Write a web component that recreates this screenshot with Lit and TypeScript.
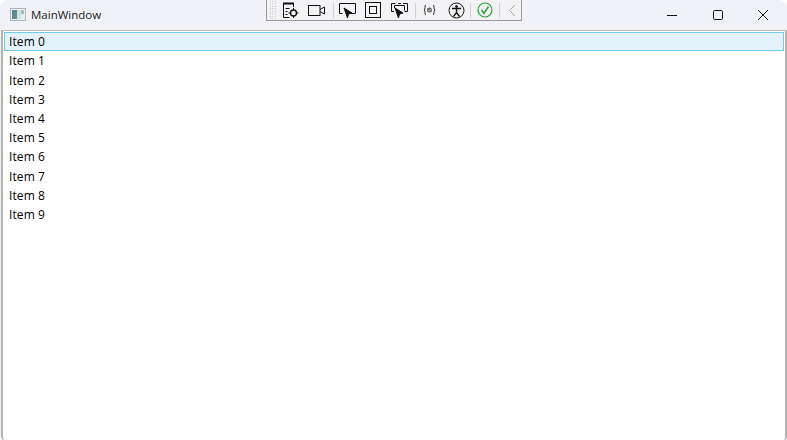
import { LitElement, css, html } from 'lit'
import { customElement } from 'lit/decorators.js'

const items = ['Item 0', 'Item 1', 'Item 2', 'Item 3', 'Item 4', 'Item 5', 'Item 6', 'Item 7', 'Item 8', 'Item 9']

@customElement('app-root')
export class AppRoot extends LitElement {
  static styles = css`
    :host {
      display: block;
      width: 787px;
      height: 440px;
      background: #ffffff;
      overflow: hidden;
      font-family: "Open Sans", "Noto Sans", sans-serif;
      font-size: 12px;
      color: #000;
    }
    .window {
      box-sizing: border-box;
      height: 440px;
      display: flex;
      flex-direction: column;
      border-radius: 8px 8px 0 0;
      background: #f1f2f8;
      position: relative;
      overflow: hidden;
    }
    .titlebar {
      height: 30px;
      flex: none;
      display: flex;
      align-items: center;
      padding: 0 0 1px 10px;
      gap: 5px;
      box-sizing: border-box;
    }
    .title {
      font-size: 11.5px;
      color: #1a1a1a;
    }
    .caption {
      margin-left: auto;
      padding-right: 1px;
      display: flex;
    }
    .caption button {
      width: 45.5px;
      height: 29px;
      padding: 0;
      border: 0;
      background: none;
      display: flex;
      align-items: center;
      justify-content: center;
    }
    .client {
      flex: 1;
      background: #fff;
      border: 2px solid #b4b4b4;
      border-width: 1px 2px 0 2px;
      border-top-color: #bcbcbc;
      margin-left: 1px;
      border-radius: 0 0 4px 4px;
      padding: 1px 1px 0 1px;
      display: flex;
      flex-direction: column;
    }
    .row {
      box-sizing: border-box;
      height: 19.2px;
      line-height: 19px;
      padding-left: 5px;
      font-size: 12px;
      letter-spacing: 0.1px;
      white-space: nowrap;
    }
    .row.sel {
      height: 19.4px;
      background: #e4f3fb;
      border: 1px solid #72c9ee;
      line-height: 17px;
      padding-left: 4px;
    }
    .toolbar {
      position: absolute;
      left: 266px;
      top: 0;
      width: 256px;
      height: 21px;
      box-sizing: border-box;
      background: #f3f3f6;
      border: 1px solid #9a9a9a;
      border-top: 0;
      display: flex;
      align-items: center;
    }
    .grip {
      width: 7px;
      height: 100%;
      flex: none;
      margin-left: 2px;
      background-image: radial-gradient(#a8a8a8 0.6px, transparent 0.7px);
      background-size: 2.5px 2.5px;
    }
    .toolbar svg {
      flex: none;
      display: block;
    }
    .sep {
      flex: none;
      width: 1px;
      height: 15px;
      background: #cfd0d6;
    }
    .i1 { margin-left: 6px; }
    .i2 { margin-left: 9px; }
    .s1 { margin-left: 8px; }
    .i3 { margin-left: 5px; }
    .i4 { margin-left: 9px; }
    .i5 { margin-left: 10px; }
    .s2 { margin-left: 7px; }
    .i6 { margin-left: 7px; }
    .i7 { margin-left: 12px; }
    .s3 { margin-left: 5px; }
    .i8 { margin-left: 6px; }
    .s4 { margin-left: 6px; }
    .i9 { margin-left: 8px; }
  `

  render() {
    return html`
      <div class="window">
        <div class="titlebar">
          <svg width="16" height="15" viewBox="0 0 16 15">
            <rect x="0.5" y="1.500" width="15" height="12" fill="#eef0f2" stroke="#b0b4ba"/>
            <rect x="2" y="3" width="5" height="9" fill="#5f8b90"/>
            <rect x="7" y="3" width="4" height="9" fill="#cfe3e2"/>
            <rect x="11" y="3" width="3" height="4" fill="#9cc6b4"/>
            <rect x="11" y="7" width="3" height="5" fill="#e6eef0"/>
          </svg>
          <span class="title">MainWindow</span>
          <div class="caption">
            <button aria-label="Minimize">
              <svg width="12" height="12" viewBox="0 0 12 12"><path d="M1 6.500h10" stroke="#111" fill="none"/></svg>
            </button>
            <button aria-label="Maximize">
              <svg width="12" height="12" viewBox="0 0 12 12"><rect x="1.500" y="1.500" width="9" height="9" rx="1.200" stroke="#111" fill="none"/></svg>
            </button>
            <button aria-label="Close">
              <svg width="12" height="12" viewBox="0 0 12 12"><path d="M1 1l10 10M11 1L1 11" stroke="#111" fill="none"/></svg>
            </button>
          </div>
        </div>
        <div class="client">
          ${items.map((t, i) => html`<div class="row ${i === 0 ? 'sel' : ''}">${t}</div>`)}
        </div>
        <div class="toolbar">
          <div class="grip"></div>
          <svg class="i1" width="17" height="18" viewBox="0 0 17 18" fill="none" stroke="#111"><path d="M1.500 3v13.500h6M11.500 3v3"/><path d="M1 2.500h11" stroke-width="2"/><path d="M3.500 7.500h4M3.500 10.500h2M3.500 13.500h2"/><circle cx="11.500" cy="12" r="3" stroke-width="1.400"/><path d="M11.500 7v2M11.500 15v2M6.500 12h2M14.500 12h2"/></svg>
          <svg class="i2" width="17" height="13" viewBox="0 0 17 13" fill="none" stroke="#111"><rect x="0.500" y="1.500" width="11.500" height="10"/><path d="M12 5.500l4.500-2.500v7l-4.500-2.500"/></svg>
          <div class="sep s1"></div>
          <svg class="i3" width="17" height="17" viewBox="0 0 17 17" fill="none" stroke="#111"><path d="M3.500 11.500h-3v-10h16v10h-6"/><path d="M5 6l8 5-3.500 1-1 4z" fill="#111"/></svg>
          <svg class="i4" width="16" height="16" viewBox="0 0 16 16" fill="none" stroke="#111"><rect x="0.500" y="0.500" width="15" height="15"/><rect x="4.500" y="4.500" width="7" height="7"/></svg>
          <svg class="i5" width="17" height="17" viewBox="0 0 17 17" fill="none" stroke="#111"><path d="M3 9.500h-2.500v-8h4M7 1.500h3M12 1.500h4.500v8h-3M3.500 6v-2.500h10v5"/><path d="M4 6l8 5-3.500 1-1 4z" fill="#111"/></svg>
          <div class="sep s2"></div>
          <svg class="i6" width="13" height="12" viewBox="0 0 13 12" fill="none" stroke="#333"><path d="M3 1c-2 0 0 4.500-2 5 2 .5 0 5 2 5M10 1c2 0 0 4.500 2 5-2 .5 0 5-2 5"/><circle cx="6.500" cy="6" r="2.500" fill="#666" stroke="none"/><path d="M5.500 6l1 1 1.500-2" stroke="#fff" stroke-width="0.700"/></svg>
          <svg class="i7" width="17" height="17" viewBox="0 0 17 17" fill="none" stroke="#111"><circle cx="8.500" cy="8.500" r="7.500"/><circle cx="8.500" cy="4.500" r="1" fill="#111"/><path d="M4 6.500h9M8.500 6.500v4M8.500 10.500l-3 4M8.500 10.500l3 4" stroke-width="1.300"/></svg>
          <div class="sep s3"></div>
          <svg class="i8" width="16" height="16" viewBox="0 0 16 16" fill="none"><circle cx="8" cy="8" r="7" stroke="#2e9e3a" stroke-width="1.200"/><path d="M4.500 8l2.500 3.500 4.500-7" stroke="#2e9e3a" stroke-width="1.500"/></svg>
          <div class="sep s4"></div>
          <svg class="i9" width="8" height="13" viewBox="0 0 8 13" fill="none" stroke="#aaa"><path d="M7 1L1.500 6.500 7 12"/></svg>
        </div>
      </div>
    `
  }
}
